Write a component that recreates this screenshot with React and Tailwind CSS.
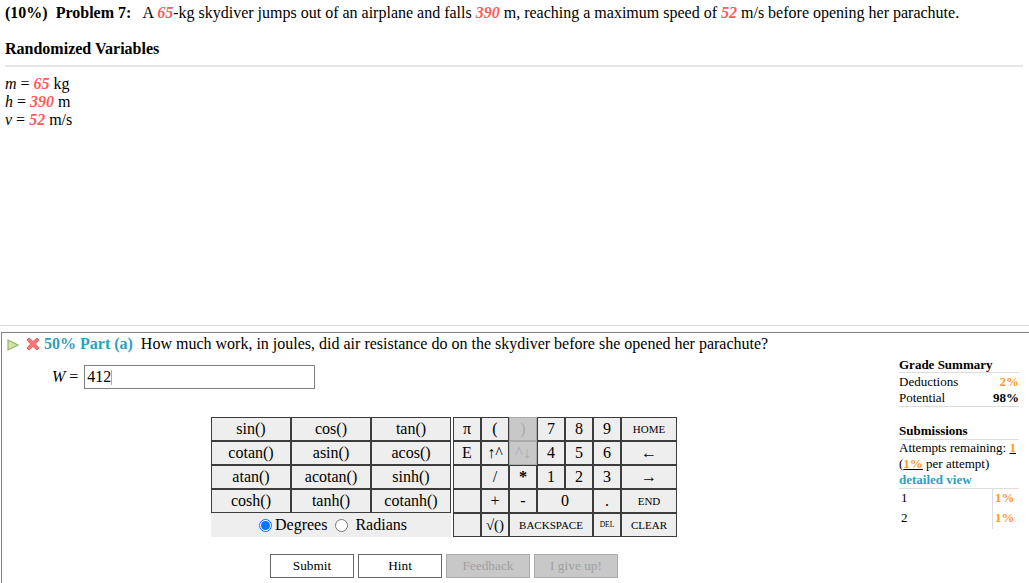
const fn = [
  ['sin()', 'cos()', 'tan()'],
  ['cotan()', 'asin()', 'acos()'],
  ['atan()', 'acotan()', 'sinh()'],
  ['cosh()', 'tanh()', 'cotanh()'],
];

const keys = [
  { t: 'π' }, { t: '(' }, { t: ')', off: true }, { t: '7' }, { t: '8' }, { t: '9' }, { t: 'HOME', small: true },
  { t: 'E' }, { t: '↑^' }, { t: '^↓', off: true }, { t: '4' }, { t: '5' }, { t: '6' }, { t: '←' },
  { t: '' }, { t: '/' }, { t: '*', bold: true }, { t: '1' }, { t: '2' }, { t: '3' }, { t: '→' },
  { t: '' }, { t: '+' }, { t: '-' }, { t: '0', span: 'col-span-2' }, { t: '.' }, { t: 'END', small: true },
  { t: '' }, { t: '√()', root: true }, { t: 'BACKSPACE', span: 'col-span-3', small: true }, { t: 'DEL', del: true }, { t: 'CLEAR', small: true },
];

function Val({ children }) {
  return <b className="italic text-[#ff5b5b]">{children}</b>;
}

function Key({ k }) {
  return (
    <div
      className={`h-[24px] flex items-center justify-center border ${k.span || ''} ${
        k.off ? 'bg-[#c8c8c8] text-[#aaa] border-[#aaa]' : 'bg-[#eee] text-black border-[#3c3c3c]'
      } ${k.small ? 'text-[11px]' : k.del ? 'text-[7.5px] text-[#666]' : k.root ? 'text-[15px]' : 'text-[16px]'} ${k.bold ? 'font-bold' : ''}`}
    >
      {k.t}
    </div>
  );
}

function ActionButton({ children, off }) {
  return (
    <div
      className={`w-[84px] h-[24px] flex items-center justify-center text-[13.33px] border ${
        off ? 'bg-[#c8c8c8] border-[#aaa] text-[#a0a0a0]' : 'bg-white border-[#666] text-black'
      }`}
    >
      {children}
    </div>
  );
}

export default function App() {
  return (
    <div className="w-[1029px] h-[583px] overflow-hidden bg-white text-black text-[16px] font-['Liberation_Serif',serif]">
      <div className="pl-[5px] pt-[4px] h-[326px] border-b border-[#ddd]">
        <p className="leading-[18px] whitespace-pre">
          <b>(10%)  Problem 7:</b>{'   '}A <Val>65</Val>-kg skydiver jumps out of an airplane and falls <Val>390</Val> m, reaching a maximum speed of <Val>52</Val> m/s before opening her parachute.
        </p>
        <p className="mt-[18px] leading-[18px] font-bold">Randomized Variables</p>
        <div className="mt-[7px] mr-[6px] h-[2px] bg-[#e6e6e6]" />
        <div className="mt-[8px] leading-[18px]">
          <p><i>m</i> = <Val>65</Val> kg</p>
          <p><i>h</i> = <Val>390</Val> m</p>
          <p><i>v</i> = <Val>52</Val> m/s</p>
        </div>
      </div>

      <div className="mt-[6px] ml-px h-[260px] border-l border-t border-[#808080] flex">
        <div className="w-[897px] shrink-0">
          <div className="h-[22px] pl-[5px] flex items-center">
            <svg width="12" height="12" viewBox="0 0 12 12" className="mr-[7px] mt-[2px]">
              <path d="M1 1 L11 6 L1 11 Z" fill="#d4e3a8" stroke="#9ab56a" strokeWidth="1.2" />
            </svg>
            <svg width="14" height="14" viewBox="0 0 14 14" className="mr-[4px]">
              <path d="M3 1 L7 4.5 L11 1 L13 3 L9.5 7 L13 11 L11 13 L7 9.5 L3 13 L1 11 L4.5 7 L1 3 Z" fill="#ff7373" stroke="#cc5a5a" strokeWidth="0.8" />
            </svg>
            <b className="text-[#2d9fc0] whitespace-pre">50% Part (a)  </b>
            <span className="whitespace-pre">How much work, in joules, did air resistance do on the skydiver before she opened her parachute?</span>
          </div>

          <div className="mt-[10px] flex items-center h-[24px] pl-[50px]">
            <span className="whitespace-pre text-[16px]"><i>W</i> = </span>
            <div className="ml-[2px] w-[231px] h-[24px] border border-[#808080] flex items-center pl-[2px]">
              412<span className="w-px h-[15px] bg-[#e58ab0]" />
            </div>
          </div>

          <div className="mt-[28px] ml-[209px] flex gap-[2px]">
            <div className="w-[240px]">
              <div className="grid grid-cols-3">
                {fn.flat().map(t => (
                  <div key={t} className="h-[24px] flex items-center justify-center border border-[#3c3c3c] bg-[#eee]">{t}</div>
                ))}
              </div>
              <div className="h-[24px] pl-[4px] bg-[#eee] flex items-center justify-center">
                <span className="w-[13px] h-[13px] rounded-full border border-[#0075ff] flex items-center justify-center bg-white mr-[3px]">
                  <span className="w-[9px] h-[9px] rounded-full bg-[#0075ff]" />
                </span>
                <span>Degrees</span>
                <span className="ml-[8px] mr-[7px] w-[13px] h-[13px] rounded-full border border-[#767676] bg-white" />
                <span>Radians</span>
              </div>
            </div>
            <div className="w-[224px] grid grid-cols-[28px_28px_28px_28px_28px_28px_56px] self-start">
              {keys.map((k, i) => <Key key={i} k={k} />)}
            </div>
          </div>

          <div className="mt-[17px] ml-[268px] flex gap-[4px]">
            <ActionButton>Submit</ActionButton>
            <ActionButton>Hint</ActionButton>
            <ActionButton off>Feedback</ActionButton>
            <ActionButton off>I give up!</ActionButton>
          </div>
        </div>

        <div className="w-[120px] pt-[24px] text-[13px] leading-[16px]">
          <div className="font-bold border-b border-[#ddd] h-[16px] whitespace-nowrap">Grade Summary</div>
          <div className="flex justify-between h-[16px] mt-px"><span>Deductions</span><b className="text-[#ff9a1f]">2%</b></div>
          <div className="flex justify-between h-[16px] border-b border-[#ddd] box-content"><span>Potential</span><b>98%</b></div>

          <div className="mt-[16px] font-bold border-b border-[#ddd] h-[17px]">Submissions</div>
          <div className="whitespace-nowrap">Attempts remaining: <b className="text-[#ff9a1f] underline decoration-black">1</b></div>
          <div>(<b className="text-[#ff9a1f] underline decoration-black">1%</b> per attempt)</div>
          <div className="font-bold text-[#2d9fc0] border-b border-[#ddd]">detailed view</div>
          <div className="flex h-[18px] items-center"><span className="w-[94px] pl-[2px] border-r border-[#ddd] h-full flex items-center">1</span><b className="pl-[2px] text-[#ff9a1f]">1%</b></div>
          <div className="flex h-[22px] items-center"><span className="w-[94px] pl-[2px] border-r border-[#ddd] h-full flex items-center">2</span><b className="pl-[2px] text-[#ff9a1f]">1%</b></div>
        </div>
      </div>
    </div>
  );
}
